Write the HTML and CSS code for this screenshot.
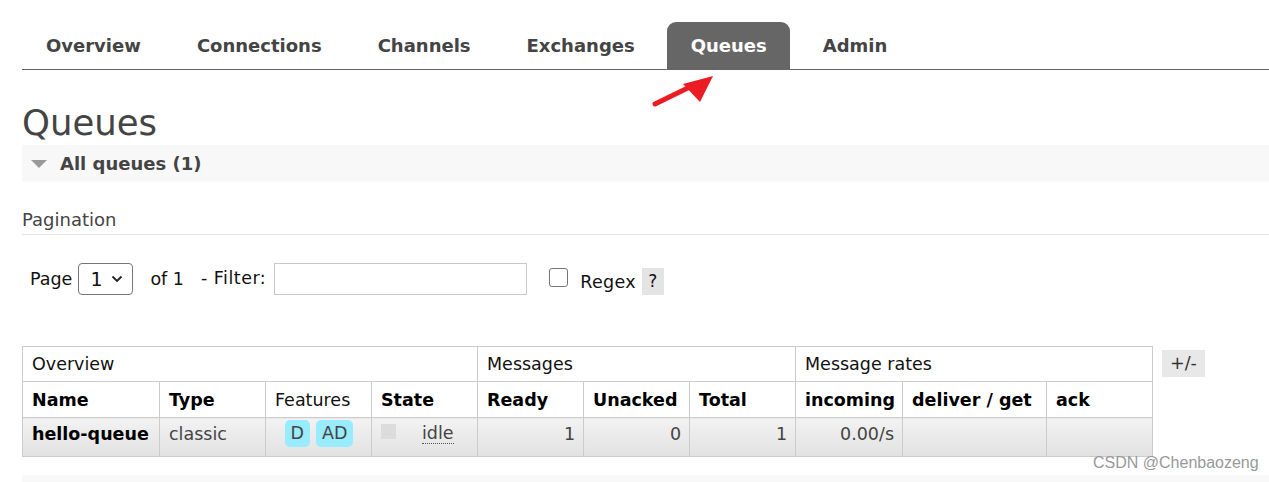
FILE: index.html
```html
<!DOCTYPE html>
<html>
<head>
<meta charset="utf-8">
<link rel="stylesheet" href="styles.css">
</head>
<body>
<div class="page">
  <nav class="tabs">
    <a class="tab">Overview</a>
    <a class="tab">Connections</a>
    <a class="tab">Channels</a>
    <a class="tab">Exchanges</a>
    <a class="tab active">Queues</a>
    <a class="tab">Admin</a>
  </nav>
  <svg class="arrow" width="70" height="40" viewBox="0 0 70 40">
    <line x1="5" y1="33" x2="46" y2="13" stroke="#ec1c24" stroke-width="5" stroke-linecap="round"/>
    <polygon points="63,5 33,13 50,31" fill="#ec1c24"/>
  </svg>
  <h1 class="title">Queues</h1>
  <div class="section-bar">
    <span class="tri"></span>
    <span class="section-title">All queues (1)</span>
  </div>
  <h3 class="sub">Pagination</h3>
  <div class="pager">
    <span class="lbl">Page</span>
    <span class="select"><span>1</span>
      <svg width="12" height="8" viewBox="0 0 12 8"><path d="M1.5 1.5 L6 6 L10.5 1.5" fill="none" stroke="#222" stroke-width="1.8"/></svg>
    </span>
    <span class="lbl of">of 1</span>
    <span class="lbl filter">- Filter:</span>
    <span class="input"></span>
    <span class="check"></span>
    <span class="lbl regex">Regex</span>
    <span class="help">?</span>
  </div>
  <div class="table-wrap">
    <table class="list">
      <colgroup>
        <col style="width:137px"><col style="width:106px"><col style="width:106px"><col style="width:106px">
        <col style="width:106px"><col style="width:106px"><col style="width:106px">
        <col style="width:107px"><col style="width:144px"><col style="width:106px">
      </colgroup>
      <tr class="group">
        <th colspan="4">Overview</th>
        <th colspan="3">Messages</th>
        <th colspan="3">Message rates</th>
      </tr>
      <tr class="heads">
        <th>Name</th><th>Type</th><th class="plain">Features</th><th>State</th>
        <th>Ready</th><th>Unacked</th><th>Total</th>
        <th>incoming</th><th>deliver / get</th><th>ack</th>
      </tr>
      <tr class="row">
        <td class="name">hello-queue</td>
        <td>classic</td>
        <td class="features"><span class="badge">D</span><span class="badge">AD</span></td>
        <td class="state"><span class="sq"></span><span class="idle">idle</span></td>
        <td class="num">1</td><td class="num">0</td><td class="num">1</td>
        <td class="num">0.00/s</td><td></td><td></td>
      </tr>
    </table>
    <span class="plusminus">+/-</span>
  </div>
  <div class="section-bar bottom"></div>
  <span class="watermark">CSDN @Chenbaozeng</span>
</div>
</body>
</html>
```
FILE: styles.css
```css
html, body {
  margin: 0;
  padding: 0;
  background: #fff;
}
body {
  font-family: "DejaVu Sans", Verdana, sans-serif;
  color: #444;
  overflow: hidden;
}
.page {
  position: relative;
  padding: 22px 0 0 22px;
  height: 460px;
}
.tabs {
  display: flex;
  gap: 9px;
  height: 47px;
  border-bottom: 1px solid #666;
}
.tab {
  display: flex;
  align-items: center;
  padding: 0 23px 0 24px;
  font-weight: bold;
  font-size: 18px;
  color: #444;
  border-radius: 9px 9px 0 0;
}
.tab.active {
  background: #666;
  color: #fff;
}
.arrow {
  position: absolute;
  left: 650px;
  top: 71px;
}
.title {
  margin: 32px 0 0;
  font-weight: normal;
  font-size: 35.5px;
  line-height: 42px;
  color: #444;
}
.section-bar {
  display: flex;
  align-items: center;
  height: 37px;
  background: #f8f8f8;
  margin-top: 1px;
}
.tri {
  width: 0;
  height: 0;
  border-left: 8px solid transparent;
  border-right: 8px solid transparent;
  border-top: 8px solid #999;
  margin-left: 9px;
  margin-right: 13px;
}
.section-title {
  font-weight: bold;
  font-size: 18px;
  color: #444;
}
.sub {
  margin: 26px 0 0;
  font-weight: normal;
  font-size: 18px;
  line-height: 23px;
  padding-bottom: 3px;
  border-bottom: 1px solid #e4e4e4;
  color: #444;
}
.pager {
  display: flex;
  align-items: center;
  margin-top: 28px;
  height: 32px;
  padding-left: 8px;
  font-size: 17.5px;
  color: #111;
}
.lbl { line-height: 20px; }
.select {
  box-sizing: border-box;
  display: flex;
  align-items: center;
  justify-content: space-between;
  width: 55px;
  height: 32px;
  margin-left: 6px;
  padding: 0 9px 0 11px;
  border: 1px solid #767676;
  border-radius: 4px;
  font-size: 19px;
}
.of { margin-left: 17px; }
.filter { margin-left: 17px; margin-top: -3px; letter-spacing: 0.5px; }
.input {
  box-sizing: border-box;
  width: 253px;
  height: 32px;
  margin-left: 8px;
  border: 1px solid #c8c8c8;
}
.check {
  box-sizing: border-box;
  width: 19px;
  height: 19px;
  margin-left: 22px;
  margin-top: -4px;
  border: 1px solid #767676;
  border-radius: 3px;
}
.regex { margin-left: 12px; margin-top: 6px; letter-spacing: 0.3px; }
.help {
  display: flex;
  align-items: center;
  justify-content: center;
  width: 22px;
  height: 27px;
  margin-left: 6px;
  margin-top: 4px;
  background: #e4e4e4;
  font-size: 17px;
}
.table-wrap {
  display: flex;
  align-items: flex-start;
  margin-top: 51px;
}
.list {
  border-collapse: collapse;
  table-layout: fixed;
  width: 1131px;
  font-size: 17.5px;
}
.list th, .list td {
  border: 1px solid #ccc;
  padding: 0 8px 0 9px;
  text-align: left;
  white-space: nowrap;
  overflow: hidden;
}
.group th {
  font-weight: normal;
  color: #111;
  height: 34px;
}
.heads th {
  font-weight: bold;
  color: #000;
  height: 35px;
}
.heads th.plain { font-weight: normal; color: #111; }
.row td {
  height: 31px;
  padding-bottom: 7px;
  background: linear-gradient(#f2f2f2, #e2e2e2);
  color: #444;
}
.row td.name { font-weight: bold; color: #000; }
.row td.num { text-align: right; }
.features { text-align: center !important; }
.badge {
  display: inline-block;
  background: #99ebff;
  border-radius: 5px;
  padding: 0 6px;
  line-height: 27px;
  margin: 0 3px;
  color: #444;
}
.state .sq {
  display: inline-block;
  width: 15px;
  height: 15px;
  background: #dcdcdc;
  vertical-align: middle;
  margin-right: 26px;
  position: relative;
  top: -3px;
}
.idle {
  border-bottom: 1px dotted #555;
  line-height: 20px;
  display: inline-block;
}
.plusminus {
  margin-left: 9px;
  margin-top: 4px;
  background: #e8e8e8;
  padding: 0 8px;
  height: 27px;
  line-height: 27px;
  font-size: 17.5px;
  color: #333;
}
.section-bar.bottom {
  margin-top: 18px;
  height: 10px;
}
.watermark {
  position: absolute;
  left: 1093px;
  top: 454px;
  font-family: "Liberation Sans", Arial, sans-serif;
  font-size: 16px;
  color: #999;
}
```
